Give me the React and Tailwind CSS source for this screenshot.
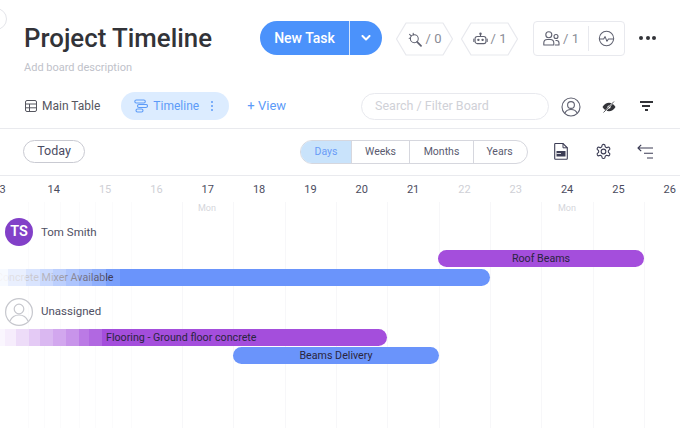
const dates = [
  ['3', 0], ['14', 0], ['15', 1], ['16', 1], ['17', 0], ['18', 0], ['19', 0],
  ['20', 0], ['21', 0], ['22', 1], ['23', 1], ['24', 0], ['25', 0], ['26', 0],
];
const fadedLines = [28, 44, 60, 79, 95, 112, 131];
const lines = [182, 233, 285, 336, 387, 439, 490, 541, 593, 644];

const stepsA = [
  ['w-[8px]', 'bg-white/95'], ['w-[18px]', 'bg-white/85'], ['w-[14px]', 'bg-white/75'], ['w-[13px]', 'bg-white/65'],
  ['w-[13px]', 'bg-white/55'], ['w-[13px]', 'bg-white/45'], ['w-[13px]', 'bg-white/35'], ['w-[14px]', 'bg-white/25'],
  ['w-[14px]', 'bg-white/10'],
];
const stepsB = [
  ['w-[5px]', 'bg-white/95'], ['w-[11px]', 'bg-white/90'], ['w-[13px]', 'bg-white/80'], ['w-[11px]', 'bg-white/70'],
  ['w-[13px]', 'bg-white/60'], ['w-[13px]', 'bg-white/50'], ['w-[13px]', 'bg-white/40'], ['w-[10px]', 'bg-white/25'],
  ['w-[13px]', 'bg-white/15'],
];

function Hex({ children }) {
  return (
    <div className="relative flex h-[34px] w-[59px] items-center justify-center text-[13px] text-[#8a8c96]">
      <svg className="absolute inset-0" width="59" height="34" viewBox="0 0 59 34" fill="none">
        <path d="M11 1H48L57.5 17L48 33H11L1.5 17Z" stroke="#e8e9ee" strokeWidth="1.2" strokeLinejoin="round" />
      </svg>
      <div className="relative flex items-center gap-[3px]">{children}</div>
    </div>
  );
}

function Bar({ className, children, steps, textClass }) {
  return (
    <div className={`relative h-[17px] overflow-hidden text-[10.7px] leading-[17px] text-[#2a2540] ${className}`}>
      <span className={textClass}>{children}</span>
      {steps && (
        <div className="absolute inset-y-0 left-0 flex">
          {steps.map(([w, bg], i) => <div key={i} className={`h-full ${w} ${bg}`} />)}
        </div>
      )}
    </div>
  );
}

export default function App() {
  return (
    <div className="relative h-[428px] w-[680px] overflow-hidden bg-white font-['Roboto',sans-serif] text-[#323338]">
      <div className="absolute left-[-15px] top-[8px] h-[22px] w-[22px] rounded-full border border-[#e4e5ea]" />

      {/* header */}
      <div className="flex h-[92px] pl-[24px]">
        <div className="w-[236px]">
          <h1 className="mt-[21px] text-[25.8px] font-medium leading-[34px] text-[#323338]">Project Timeline</h1>
          <p className="mt-[6px] text-[11px] leading-[14px] text-[#c0c2ca]">Add board description</p>
        </div>
        <div className="mt-[21px] flex h-[34px] w-[122px] overflow-hidden rounded-full bg-[#4b92fb] text-white">
          <div className="flex w-[89px] items-center justify-center text-[14px] font-medium">New Task</div>
          <div className="flex flex-1 items-center justify-center border-l border-[#d5e5fd]">
            <svg width="10" height="6" viewBox="0 0 10 6" fill="none"><path d="M1.5 1L5 4.5L8.5 1" stroke="white" strokeWidth="2" strokeLinecap="round" strokeLinejoin="round" /></svg>
          </div>
        </div>
        <div className="ml-[13px] mt-[22px] flex gap-[6px]">
          <Hex>
            <svg width="15" height="15" viewBox="0 0 19 19" fill="none" stroke="#5f6170" strokeWidth="1.3" strokeLinecap="round">
              <circle cx="8" cy="8.5" r="5" />
              <path d="M11.5 12.5L16.5 17.5" strokeWidth="2.2" />
              <path d="M4 5L2 3M7 3.5L6.5 1.5M3.2 8H1.5" />
            </svg>
            <span>/ 0</span>
          </Hex>
          <Hex>
            <svg width="15" height="14" viewBox="0 0 18 16" fill="none" stroke="#5f6170" strokeWidth="1.3" strokeLinecap="round">
              <rect x="2.5" y="5" width="13" height="8.5" rx="2.5" />
              <path d="M9 5V2" />
              <circle cx="9" cy="1.6" r=".8" fill="#5f6170" />
              <path d="M1 8v3M17 8v3" />
              <circle cx="6.5" cy="9" r=".8" fill="#5f6170" />
              <circle cx="11.5" cy="9" r=".8" fill="#5f6170" />
            </svg>
            <span>/ 1</span>
          </Hex>
        </div>
        <div className="ml-[14px] mt-[21px] flex h-[35px] w-[92px] items-center rounded-[4px] border border-[#e8e9ee]">
          <div className="flex w-[54px] items-center justify-center gap-[3px] text-[13px] text-[#8a8c96]">
            <svg width="17" height="15" viewBox="0 0 17 15" fill="none" stroke="#5f6170" strokeWidth="1.1">
              <circle cx="5.8" cy="3.8" r="3" />
              <path d="M.8 14v-2a3.5 3.5 0 0 1 3.5-3.5h3A3.5 3.5 0 0 1 10.8 12v2z" strokeLinejoin="round" />
              <circle cx="13" cy="5.5" r="2" />
              <path d="M12.5 9.5h1a2.5 2.5 0 0 1 2.5 2.5v2h-4" strokeLinejoin="round" />
            </svg>
            <span>/ 1</span>
          </div>
          <div className="h-[25px] w-px bg-[#e8e9ee]" />
          <div className="flex flex-1 items-center justify-center">
            <svg width="17" height="17" viewBox="0 0 18 18" fill="none" stroke="#5f6170" strokeWidth="1.1" strokeLinejoin="round" strokeLinecap="round">
              <circle cx="9" cy="9" r="7.6" />
              <path d="M1.5 9.5H6L7.5 7L9.5 12L11 9.5H16.5" />
            </svg>
          </div>
        </div>
        <div className="ml-[14px] mt-[36px] flex h-[5px] gap-[2.4px]">
          <span className="h-[4.2px] w-[4.2px] rounded-full bg-[#323338]" />
          <span className="h-[4.2px] w-[4.2px] rounded-full bg-[#323338]" />
          <span className="h-[4.2px] w-[4.2px] rounded-full bg-[#323338]" />
        </div>
      </div>

      {/* tabs */}
      <div className="flex h-[37px] items-start border-b border-[#e9eaee] pb-[8px]">
        <div className="ml-[25px] flex h-[28px] items-center gap-[5px] text-[12px] text-[#55565f]">
          <svg width="12" height="12" viewBox="0 0 12 12" fill="none" stroke="#55565f" strokeWidth="1">
            <rect x=".5" y=".5" width="11" height="11" rx="1.5" />
            <path d="M.5 4h11M.5 7.8h11M4.5 4v7.5" />
          </svg>
          <span>Main Table</span>
        </div>
        <div className="ml-[21px] flex h-[28px] w-[108px] items-center rounded-full bg-[#dcecff] pl-[13px] text-[12px] text-[#5c9bf8]">
          <svg width="14" height="14" viewBox="0 0 14 14" fill="none" stroke="#5c9bf8" strokeWidth="1.1">
            <rect x=".8" y="1" width="10.5" height="3" rx="1.5" />
            <rect x="3.5" y="5.5" width="10" height="3" rx="1.5" />
            <rect x="2" y="10" width="7" height="3" rx="1.5" />
          </svg>
          <span className="ml-[5px]">Timeline</span>
          <span className="ml-[12px] flex flex-col gap-[2px]">
            <i className="h-[2px] w-[2px] rounded-full bg-[#5c9bf8]" />
            <i className="h-[2px] w-[2px] rounded-full bg-[#5c9bf8]" />
            <i className="h-[2px] w-[2px] rounded-full bg-[#5c9bf8]" />
          </span>
        </div>
        <div className="ml-[18px] flex h-[28px] items-center text-[13px] text-[#5c9bf8]">+ View</div>
        <div className="ml-[75px] mt-[1px] flex h-[27px] w-[188px] items-center rounded-full border border-[#e8e9ee] pl-[13px] text-[12.5px] text-[#d0d1d7]">Search / Filter Board</div>
        <div className="ml-[12px] mt-[2px] flex h-[26px] w-[20px] items-center justify-center">
          <svg width="20" height="20" viewBox="0 0 20 20" fill="none" stroke="#5f6170" strokeWidth="1.1">
            <circle cx="10" cy="10" r="9" />
            <circle cx="10" cy="8" r="3.4" />
            <path d="M3.8 16.2C5 13.5 7 12.5 10 12.5s5 1 6.2 3.7" />
          </svg>
        </div>
        <div className="ml-[20px] mt-[2px] flex h-[26px] w-[16px] items-center justify-center">
          <svg width="14" height="12" viewBox="0 0 14 12">
            <path d="M.5 6C2.5 3 4.5 1.8 7 1.8S11.5 3 13.5 6C11.5 9 9.5 10.2 7 10.2S2.5 9 .5 6Z" fill="#323338" />
            <circle cx="7" cy="6" r="1.6" fill="white" />
            <path d="M2 11.5L12 .5" stroke="white" strokeWidth="1.4" />
            <path d="M1.5 11.5L12 .5" stroke="#323338" strokeWidth=".8" />
          </svg>
        </div>
        <div className="ml-[22px] mt-[9px] flex w-[14px] flex-col items-center gap-[2.5px]">
          <span className="h-[1.6px] w-[13px] bg-[#323338]" />
          <span className="h-[1.6px] w-[8px] bg-[#323338]" />
          <span className="h-[2px] w-[3px] bg-[#323338]" />
        </div>
      </div>

      {/* toolbar */}
      <div className="flex h-[47px] items-start border-b border-[#e9eaee] pt-[11px]">
        <button className="ml-[23px] flex h-[23px] w-[62px] items-center justify-center rounded-full border border-[#c9cad2] text-[12.5px] text-[#4b4c63]">Today</button>
        <div className="ml-[215px] flex h-[24px] w-[228px] overflow-hidden rounded-full border border-[#d6d7de] text-[10.5px] text-[#5a5b70]">
          <div className="flex w-[51px] items-center justify-center border-r border-[#d6d7de] bg-[#c9e3fb] text-[#6a9cf7]">Days</div>
          <div className="flex w-[58px] items-center justify-center border-r border-[#d6d7de]">Weeks</div>
          <div className="flex w-[64px] items-center justify-center border-r border-[#d6d7de]">Months</div>
          <div className="flex flex-1 items-center justify-center pr-[2px]">Years</div>
        </div>
        <div className="ml-[26px] flex h-[23px] w-[14px] items-center justify-center">
          <svg width="14" height="17" viewBox="0 0 14 17" fill="none">
            <path d="M.7 1.2a.7.7 0 0 1 .7-.7H9L13.3 4.8V15.6a.7.7 0 0 1-.7.7H1.4a.7.7 0 0 1-.7-.7Z" stroke="#3c3d55" strokeWidth="1.1" />
            <path d="M9 .5V4.8H13.3" stroke="#3c3d55" strokeWidth="1" />
            <rect x="2.5" y="8" width="9" height="5.5" fill="#3c3d55" />
            <path d="M2.5 10.5H7" stroke="white" strokeWidth=".8" />
          </svg>
        </div>
        <div className="ml-[27px] flex h-[23px] w-[17px] items-center justify-center">
          <svg width="17" height="17" viewBox="0 0 24 24" fill="none" stroke="#3c3d55" strokeWidth="1.6" strokeLinejoin="round">
            <path d="M12.2 2h-.4a2 2 0 0 0-2 2v.2a2 2 0 0 1-1 1.7l-.4.3a2 2 0 0 1-2 0l-.2-.1a2 2 0 0 0-2.7.7l-.2.4a2 2 0 0 0 .7 2.7l.2.1a2 2 0 0 1 1 1.7v.5a2 2 0 0 1-1 1.7l-.2.1a2 2 0 0 0-.7 2.7l.2.4a2 2 0 0 0 2.7.7l.2-.1a2 2 0 0 1 2 0l.4.3a2 2 0 0 1 1 1.7v.2a2 2 0 0 0 2 2h.4a2 2 0 0 0 2-2v-.2a2 2 0 0 1 1-1.7l.4-.3a2 2 0 0 1 2 0l.2.1a2 2 0 0 0 2.7-.7l.2-.4a2 2 0 0 0-.7-2.7l-.2-.1a2 2 0 0 1-1-1.7v-.5a2 2 0 0 1 1-1.7l.2-.1a2 2 0 0 0 .7-2.7l-.2-.4a2 2 0 0 0-2.7-.7l-.2.1a2 2 0 0 1-2 0l-.4-.3a2 2 0 0 1-1-1.7V4a2 2 0 0 0-2-2Z" />
            <circle cx="12" cy="12" r="3.3" />
          </svg>
        </div>
        <div className="ml-[25px] flex h-[23px] w-[17px] items-center justify-center">
          <svg width="17" height="15" viewBox="0 0 17 15" fill="none" stroke="#3c3d55" strokeWidth="1.1">
            <path d="M16 4H1M4.2 .8L1 4L4.2 7.2" strokeLinejoin="round" />
            <path d="M7 9.2H16M10 14H16" />
          </svg>
        </div>
      </div>

      {/* timeline */}
      <div className="relative">
        <div className="absolute inset-x-0 top-[26px] h-[227px]">
          {fadedLines.map((x) => <div key={x} className="absolute inset-y-0 w-px bg-[#fbfbfc]" style={{ left: x }} />)}
          {lines.map((x) => <div key={x} className="absolute inset-y-0 w-px bg-[#f7f7f9]" style={{ left: x }} />)}
        </div>
        <div className="ml-[-23.2px] flex h-[26px] w-[719px] items-center pt-[2px] text-[11px]">
          {dates.map(([d, off]) => (
            <div key={d} className={`w-[51.33px] shrink-0 text-center ${off ? 'text-[#cfd0d6]' : 'text-[#4b4c5e]'}`}>{d}</div>
          ))}
        </div>
        <div className="relative">
          <div className="flex h-[13px] text-[9px] leading-[13px] text-[#d5d6db]">
            <span className="ml-[198px]">Mon</span>
            <span className="ml-[342px]">Mon</span>
          </div>
          <div className="mt-[3px] flex h-[28px] items-center pl-[5px]">
            <div className="flex h-[28px] w-[28px] items-center justify-center rounded-full bg-[#8240c8] text-[14.5px] font-semibold text-white">TS</div>
            <span className="ml-[8px] pt-[1px] text-[11.5px] text-[#4f5063]">Tom Smith</span>
          </div>
          <Bar className="ml-[438px] mt-[4px] w-[206px] rounded-full bg-[#a44edc] text-center">Roof Beams</Bar>
          <Bar className="mt-[2px] w-[490px] rounded-r-full bg-[#6a94fb] pl-[5px]" steps={stepsA} textClass="inline-block -ml-[9px] whitespace-nowrap">Concrete Mixer Available</Bar>
          <div className="mt-[12px] flex h-[28px] items-center pl-[5px]">
            <svg width="28" height="28" viewBox="0 0 28 28" fill="none" stroke="#c6c7cd" strokeWidth="1.2">
              <circle cx="14" cy="14" r="13.4" />
              <circle cx="14" cy="11" r="4.8" />
              <path d="M5 23C7 18.5 10 17 14 17s7 1.5 9 6" />
            </svg>
            <span className="ml-[8px] text-[11.5px] text-[#4f5063]">Unassigned</span>
          </div>
          <Bar className="mt-[3px] w-[387px] rounded-r-full bg-[#a44edc] pl-[106px]" steps={stepsB}>Flooring - Ground floor concrete</Bar>
          <Bar className="ml-[233px] mt-[1px] w-[206px] rounded-full bg-[#6a94fb] text-center">Beams Delivery</Bar>
        </div>
      </div>
    </div>
  );
}
